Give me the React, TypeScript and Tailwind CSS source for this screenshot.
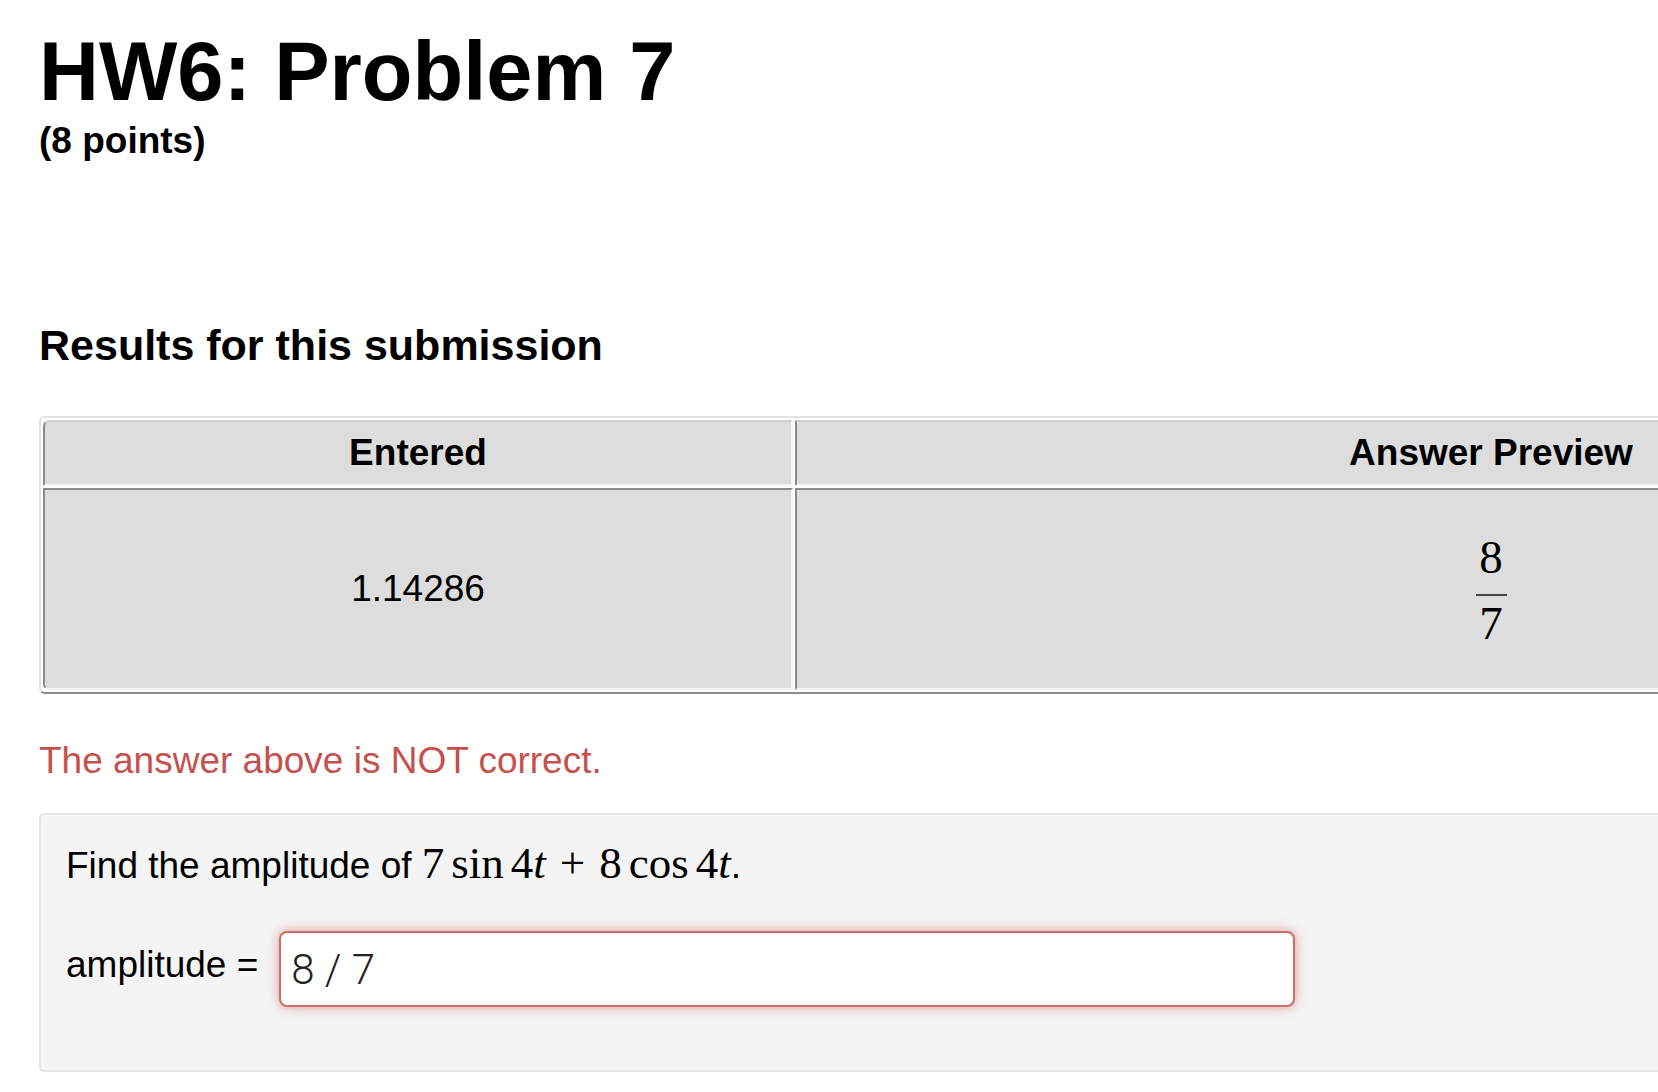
export default function App() {
  const cell =
    "border-2 border-t-[#8a8a8a] border-l-[#8a8a8a] border-b-[#f5f5f5] border-r-[#f5f5f5] bg-[#dddddd] p-0 text-center align-middle";

  return (
    <div className="w-[1658px] h-[1092px] overflow-hidden bg-white text-black font-['Liberation_Sans',Arial,sans-serif]">
      <div className="pl-[39px] pt-[30px]">
        <h1 className="text-[83px] leading-[83px] font-bold">HW6: Problem 7</h1>
        <div className="mt-[8px] text-[37px] leading-[40px] font-bold">(8 points)</div>

        <h2 className="mt-[160px] text-[43px] leading-[48px] font-bold">
          Results for this submission
        </h2>

        <table className="mt-[47px] w-[2152px] table-fixed border-separate border-spacing-[2px] border-2 border-t-[#e2e2e2] border-l-[#e2e2e2] border-b-[#8c8c8c] border-r-[#8c8c8c] rounded-[6px]">
          <thead>
            <tr>
              <th className={`${cell} w-[750px] h-[66px] rounded-tl-[6px] border-t-[#cfcfcf] text-[37px] font-bold`}>
                Entered
              </th>
              <th className={`${cell} h-[66px] border-t-[#cfcfcf] text-[37px] font-bold`}>
                Answer Preview
              </th>
            </tr>
          </thead>
          <tbody>
            <tr>
              <td className={`${cell} h-[202px] rounded-bl-[6px] text-[37px]`}>1.14286</td>
              <td className={`${cell} h-[202px]`}>
                <span className="inline-flex flex-col items-center pt-[2px] font-['Liberation_Serif',serif] text-[47px] leading-none">
                  <span className="mb-[13px]">8</span>
                  <span className="h-[2px] w-[31px] bg-[#444]" />
                  <span className="mt-[4px]">7</span>
                </span>
              </td>
            </tr>
          </tbody>
        </table>

        <p className="mt-[46px] text-[37px] leading-[42px] text-[#c4514e]">
          The answer above is NOT correct.
        </p>

        <div className="mt-[31px] w-[2152px] border-2 border-[#e6e6e6] rounded-[5px] bg-[#f4f4f4] pt-[26px] pl-[25px] pb-[63px]">
          <p className="text-[37px] leading-[50px]">
            Find the amplitude of{" "}
            <span className="font-['Liberation_Serif',serif] text-[45px] leading-none">
              <span className="mr-[7px]">7</span>
              <span className="mr-[7px]">sin</span>
              <span>4</span>
              <span className="italic">t</span>
              <span className="mx-[14px]">+</span>
              <span className="mr-[7px]">8</span>
              <span className="mr-[7px]">cos</span>
              <span>4</span>
              <span className="italic">t</span>
            </span>
            .
          </p>

          <div className="mt-[40px] flex items-center">
            <label className="pb-[8px] text-[37px] leading-[42px]">amplitude =</label>
            <input
              readOnly
              value="8 / 7"
              className="ml-[21px] w-[1016px] h-[76px] border-2 border-[#cd6c6c] rounded-[8px] bg-white px-[10px] text-[42px] font-light text-[#222] outline-none shadow-[0_0_12px_rgba(200,80,80,0.55)] font-['Roboto','Liberation_Sans',sans-serif]"
            />
          </div>
        </div>
      </div>
    </div>
  );
}
